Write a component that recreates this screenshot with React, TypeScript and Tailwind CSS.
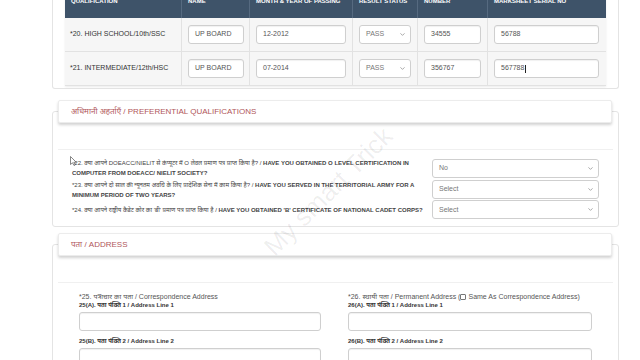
import React from "react";
import { ChevronDown } from "lucide-react";

const Field: React.FC<{ value?: string; className?: string; caret?: boolean }> = ({ value, className, caret }) => (
  <div
    className={`h-[19px] flex items-center px-[6px] rounded-[3px] border border-[#cfcfcf] bg-white shadow-[inset_0_1px_1px_rgba(0,0,0,0.06)] text-[7px] text-[#555] ${className ?? ""}`}
  >
    {value}
    {caret && <span className="ml-[1px] w-px h-[8px] bg-[#222]" />}
  </div>
);

const Select: React.FC<{ value: string; className?: string }> = ({ value, className }) => (
  <div
    className={`h-[19px] flex items-center justify-between pl-[6px] pr-[4px] rounded-[3px] border border-[#cfcfcf] bg-white text-[7px] text-[#777] ${className ?? ""}`}
  >
    <span>{value}</span>
    <ChevronDown size={7} strokeWidth={2.5} className="text-[#888]" />
  </div>
);

const SectionHead: React.FC<{ title: string }> = ({ title }) => (
  <div className="relative -mt-[12px] ml-[5px] mr-[6px] h-[23px] flex items-center pl-[12px] bg-white border border-[#ececec] rounded-[2px] shadow-[0_2px_3px_rgba(0,0,0,0.18)] text-[8px] text-[#b0565a]">
    {title}
  </div>
);

const rows = [
  { q: "*20. HIGH SCHOOL/10th/SSC", board: "UP BOARD", date: "12-2012", roll: "34555", serial: "56788" },
  { q: "*21. INTERMEDIATE/12th/HSC", board: "UP BOARD", date: "07-2014", roll: "356767", serial: "567788" },
];

const heads = ["QUALIFICATION", "NAME", "MONTH & YEAR OF PASSING", "RESULT STATUS", "NUMBER", "MARKSHEET SERIAL NO"];

export default function App() {
  return (
    <div className="relative w-[640px] h-[360px] overflow-hidden bg-white font-['Liberation_Sans','Noto_Sans',sans-serif] text-[#333]">
      <div className="-mt-[14px] ml-[52px] w-[567px]">
        {/* Qualification table */}
        <div className="border-x border-b border-[#e4e4e4] rounded-b-[3px] px-[12px] pb-[2px]">
          <div className="grid grid-cols-[116px_68px_103px_65px_70px_119px] bg-[#f6f6f6] shadow-[0_1px_2px_rgba(0,0,0,0.08)]">
            {heads.map((h, i) => (
              <div
                key={h}
                className={`h-[32px] bg-[#3e5369] flex items-center pl-[6px] pb-[2px] text-[6px] font-bold text-white ${i ? "border-l border-[#566a80]" : ""}`}
              >
                {h}
              </div>
            ))}
            {rows.map((r) => (
              <React.Fragment key={r.q}>
                <div className="h-[34px] border-b border-[#e2e2e2] flex items-center pl-[5px] text-[7px] text-[#333]">{r.q}</div>
                <div className="h-[34px] border-b border-l border-[#e2e2e2] flex items-center pl-[6px]">
                  <Field value={r.board} className="w-[56px]" />
                </div>
                <div className="h-[34px] border-b border-l border-[#e2e2e2] flex items-center pl-[6px]">
                  <Field value={r.date} className="w-[90px]" />
                </div>
                <div className="h-[34px] border-b border-l border-[#e2e2e2] flex items-center pl-[6px]">
                  <Select value="PASS" className="w-[52px]" />
                </div>
                <div className="h-[34px] border-b border-l border-[#e2e2e2] flex items-center pl-[6px]">
                  <Field value={r.roll} className="w-[57px]" />
                </div>
                <div className="h-[34px] border-b border-l border-[#e2e2e2] flex items-center pl-[6px]">
                  <Field value={r.serial} caret={r.serial === "567788"} className="w-[105px]" />
                </div>
              </React.Fragment>
            ))}
          </div>
        </div>

        {/* Preferential qualifications */}
        <div className="mt-[22px] border border-[#e4e4e4] rounded-[3px] pb-[7px]">
          <SectionHead title="अधिमानी अहर्ताएँ / PREFERENTIAL QUALIFICATIONS" />
          <div className="mt-[26px] mx-[5px] border-t border-[#f0f0f0]" />
          <div className="mt-[8px] pl-[19px] pr-[19px] flex flex-col gap-[1px] text-[6px] leading-[10px] text-[#444]">
            <div className="flex items-center justify-between h-[20px]">
              <div className="whitespace-nowrap">
                *22. क्या आपने DOEACC/NIELIT से कंप्यूटर में O लेवल प्रमाण पत्र प्राप्त किया है? / <b>HAVE YOU OBTAINED O LEVEL CERTIFICATION IN</b>
                <br />
                <b>COMPUTER FROM DOEACC/ NIELIT SOCIETY?</b>
              </div>
              <Select value="No" className="w-[167px]" />
            </div>
            <div className="flex items-center justify-between h-[20px]">
              <div className="whitespace-nowrap mt-[2px]">
                *23. क्या आपने दो साल की न्यूनतम अवधि के लिए प्रादेशिक सेना में काम किया है? / <b>HAVE YOU SERVED IN THE TERRITORIAL ARMY FOR A</b>
                <br />
                <b>MINIMUM PERIOD OF TWO YEARS?</b>
              </div>
              <Select value="Select" className="w-[167px]" />
            </div>
            <div className="flex items-center justify-between h-[19px]">
              <div className="whitespace-nowrap">
                *24. क्या आपने राष्ट्रीय कैडेट कोर का 'बी' प्रमाण पत्र प्राप्त किया है / <b>HAVE YOU OBTAINED 'B' CERTIFICATE OF NATIONAL CADET CORPS?</b>
              </div>
              <Select value="Select" className="w-[167px]" />
            </div>
          </div>
        </div>

        {/* Address */}
        <div className="mt-[17px] border border-[#e4e4e4] rounded-[3px] h-[140px]">
          <SectionHead title="पता / ADDRESS" />
          <div className="mt-[26px] mx-[5px] border-t border-[#f0f0f0]" />
          <div className="mt-[9px] pl-[26px] flex gap-[27px]">
            <div className="w-[242px]">
              <div className="text-[7px] leading-[9px] text-[#555]">*25. पत्राचार का पता / Correspondence Address</div>
              <div className="text-[6px] leading-[9px] font-bold text-[#333]">25(A). पता पंक्ति 1 / Address Line 1</div>
              <Field className="w-[242px] h-[19px] mt-[2px]" />
              <div className="mt-[6px] text-[6px] leading-[9px] font-bold text-[#333]">25(B). पता पंक्ति 2 / Address Line 2</div>
              <Field className="w-[242px] h-[19px] mt-[2px]" />
            </div>
            <div className="w-[244px]">
              <div className="flex items-center text-[7px] leading-[9px] text-[#555]">
                *26. स्थायी पता / Permanent Address (
                <span className="inline-block w-[6px] h-[6px] border border-[#777] rounded-[1px] mr-[2px]" />
                Same As Correspondence Address)
              </div>
              <div className="text-[6px] leading-[9px] font-bold text-[#333]">26(A). पता पंक्ति 1 / Address Line 1</div>
              <Field className="w-[244px] h-[19px] mt-[2px]" />
              <div className="mt-[6px] text-[6px] leading-[9px] font-bold text-[#333]">26(B). पता पंक्ति 2 / Address Line 2</div>
              <Field className="w-[244px] h-[19px] mt-[2px]" />
            </div>
          </div>
        </div>
      </div>

      {/* mouse pointer */}
      <svg className="absolute left-[70px] top-[156px]" width="7" height="10" viewBox="0 0 7 10">
        <path d="M0.5 0.5 L0.5 8.5 L2.5 6.8 L4 9.5 L5.2 9 L3.8 6.3 L6.3 6.3 Z" fill="white" stroke="#555" strokeWidth="0.7" />
      </svg>

      {/* watermark */}
      <div className="absolute left-[244px] top-[172px] -rotate-45 text-[26px] text-black/[0.07] whitespace-nowrap pointer-events-none">
        My smart Trick
      </div>
    </div>
  );
}
